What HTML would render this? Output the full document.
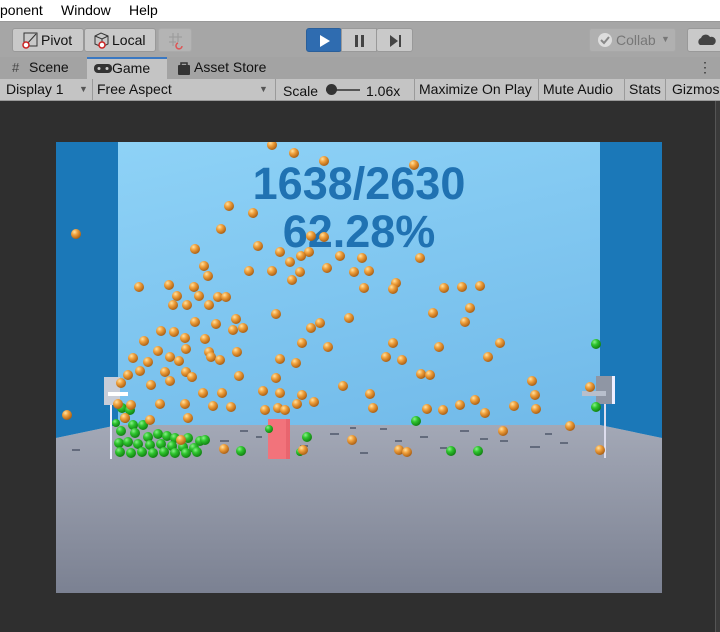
<!DOCTYPE html>
<html><head><meta charset="utf-8"><style>
*{margin:0;padding:0;box-sizing:border-box}
body{width:720px;height:632px;overflow:hidden;background:#2f2f2f;font-family:"Liberation Sans",sans-serif;position:relative}
.menu{position:absolute;left:0;top:0;width:720px;height:21px;background:#fff;font-size:14px;color:#000}
.menu span{position:absolute;top:2px}
.tb{position:absolute;left:0;top:21px;width:720px;height:36px;background:#a6a6a6;border-top:1px solid #999}
.btn{position:absolute;top:6px;height:24px;background:#c9c9c9;border:1px solid #999;border-radius:3px;font-size:14px;color:#111;line-height:22px}
.tabs{position:absolute;left:0;top:57px;width:720px;height:22px;background:#a3a3a3}
.tab{position:absolute;top:0;height:22px;font-size:14px;line-height:21px;color:#111}
.gt{position:absolute;left:0;top:79px;width:720px;height:22px;background:#c4c4c4;border-bottom:1px solid #999;font-size:14px;color:#111}
.gt div{position:absolute;top:0;height:21px;line-height:21px;border-right:1px solid #9a9a9a}
</style></head><body>
<div class="menu"><span style="left:0">ponent</span><span style="left:61px">Window</span><span style="left:129px">Help</span></div>
<div class="tb">
 <div class="btn" style="left:12px;width:72px"><svg width="20" height="20" style="position:absolute;left:8px;top:1px"><rect x="3" y="3" width="13" height="13" fill="none" stroke="#333"/><line x1="5" y1="15" x2="15" y2="4" stroke="#333"/><circle cx="5" cy="15" r="3" fill="#fff" stroke="#c22" stroke-width="1.5"/></svg><span style="position:absolute;left:28px">Pivot</span></div>
 <div class="btn" style="left:84px;width:72px"><svg width="20" height="20" style="position:absolute;left:7px;top:1px"><path d="M3 6 L9 3 L16 6 L16 14 L10 17 L3 14 Z M3 6 L10 9 L16 6 M10 9 V17" fill="none" stroke="#333"/><circle cx="10" cy="15" r="3" fill="#fff" stroke="#c22" stroke-width="1.5"/></svg><span style="position:absolute;left:27px">Local</span></div>
 <div class="btn" style="left:158px;width:34px;background:#b4b4b4;border-color:#aaa"><svg width="20" height="20" style="position:absolute;left:7px;top:1px"><path d="M7 3V16M12 3V12M3 7H16M3 12H10" stroke="#999"/><path d="M12 13a3 3 0 1 0 4 3" fill="none" stroke="#d55" stroke-width="1.5"/></svg></div>
 <div class="btn" style="left:306px;width:36px;background:#2f6cb0;border-color:#2a5f9a"><svg width="14" height="14" style="position:absolute;left:11px;top:5px"><path d="M2 1L12 7L2 13Z" fill="#fff"/></svg></div>
 <div class="btn" style="left:341px;width:36px;border-radius:0"><svg width="14" height="14" style="position:absolute;left:11px;top:5px"><rect x="2" y="1" width="3" height="12" fill="#444"/><rect x="8" y="1" width="3" height="12" fill="#444"/></svg></div>
 <div class="btn" style="left:376px;width:37px"><svg width="14" height="14" style="position:absolute;left:12px;top:5px"><path d="M1 1L9 7L1 13Z" fill="#444"/><rect x="10" y="1" width="2" height="12" fill="#444"/></svg></div>
 <div class="btn" style="left:589px;width:87px;background:#b0b0b0;border-color:#a8a8a8;color:#777"><svg width="16" height="16" style="position:absolute;left:7px;top:3px"><circle cx="8" cy="8" r="7" fill="#ddd"/><path d="M4 8L7 11L12 5" stroke="#888" stroke-width="2" fill="none"/></svg><span style="position:absolute;left:26px">Collab</span><span style="position:absolute;left:71px;top:-1px;font-size:9px">▼</span></div>
 <div class="btn" style="left:687px;width:40px"><svg width="22" height="16" style="position:absolute;left:8px;top:3px"><path d="M4 13a4 4 0 0 1 1-7a5 5 0 0 1 9-1a4 4 0 0 1 3 8Z" fill="#444"/></svg></div>
</div>
<div class="tabs">
 <div class="tab" style="left:4px;width:83px"><span style="position:absolute;left:8px;font-size:13px;color:#444">#</span><span style="position:absolute;left:25px">Scene</span></div>
 <div class="tab" style="left:87px;width:80px;background:#c4c4c4;border-top:2px solid #3a78c2;line-height:18px"><svg width="18" height="12" style="position:absolute;left:7px;top:4px"><rect x="0" y="1" width="18" height="9" rx="4" fill="#333"/><circle cx="5" cy="5.5" r="1.5" fill="#ccc"/><circle cx="13" cy="5.5" r="1.5" fill="#ccc"/></svg><span style="position:absolute;left:25px">Game</span></div>
 <div class="tab" style="left:176px;width:110px"><svg width="12" height="14" style="position:absolute;left:2px;top:4px"><rect x="0" y="4" width="12" height="10" rx="1" fill="#333"/><path d="M3 5V2h6v3" fill="none" stroke="#333" stroke-width="1.5"/></svg><span style="position:absolute;left:18px">Asset Store</span></div>
 <div class="tab" style="left:698px;color:#333">⋮</div>
</div>
<div class="gt">
 <div style="left:0;width:93px;padding-left:6px">Display 1<span style="position:absolute;left:79px;font-size:9px;color:#555">▼</span></div>
 <div style="left:93px;width:183px;padding-left:4px">Free Aspect<span style="position:absolute;left:166px;font-size:9px;color:#555">▼</span></div>
 <div style="left:276px;width:139px;padding-left:7px;line-height:24px">Scale<span style="position:absolute;left:50px;top:10px;width:34px;height:2px;background:#555"></span><span style="position:absolute;left:50px;top:5px;width:11px;height:11px;border-radius:50%;background:#333"></span><span style="position:absolute;left:90px">1.06x</span></div>
 <div style="left:415px;width:124px;padding-left:4px">Maximize On Play</div>
 <div style="left:539px;width:86px;padding-left:4px">Mute Audio</div>
 <div style="left:625px;width:41px;padding-left:4px">Stats</div>
 <div style="left:666px;width:60px;padding-left:6px">Gizmos</div>
</div>
<div style="position:absolute;left:715px;top:101px;width:5px;height:531px;background:#3a3a3a;border-left:1px solid #555"></div>
<svg style="position:absolute;left:56px;top:142px" width="606" height="451" viewBox="56 142 606 451">
<defs>
<linearGradient id="sky" x1="0" y1="0" x2="0.3" y2="1"><stop offset="0" stop-color="#8fd3f7"/><stop offset="1" stop-color="#6ab4e6"/></linearGradient>
<linearGradient id="fl" x1="0" y1="0" x2="0" y2="1"><stop offset="0" stop-color="#a3a8b6"/><stop offset="1" stop-color="#7b8192"/></linearGradient>
<radialGradient id="o" cx="0.35" cy="0.3" r="0.75"><stop offset="0" stop-color="#ffe2a0"/><stop offset="0.4" stop-color="#f0a03c"/><stop offset="1" stop-color="#a55a10"/></radialGradient>
<radialGradient id="g" cx="0.35" cy="0.3" r="0.75"><stop offset="0" stop-color="#8af08a"/><stop offset="0.4" stop-color="#2ec42e"/><stop offset="1" stop-color="#0f7a10"/></radialGradient>
</defs>
<rect x="56" y="142" width="606" height="451" fill="url(#sky)"/>
<polygon points="56,142 118,142 118,425 56,438" fill="#1b78b8"/>
<polygon points="600,142 662,142 662,438 600,425" fill="#1b78b8"/>
<polygon points="56,438 118,425 600,425 662,438 662,593 56,593" fill="url(#fl)"/>
<g fill="#4a5366" opacity="0.7">
<rect x="240" y="430" width="8" height="2"/><rect x="330" y="433" width="9" height="2"/><rect x="380" y="428" width="7" height="2"/><rect x="420" y="436" width="8" height="2"/><rect x="460" y="430" width="9" height="2"/><rect x="500" y="440" width="8" height="2"/><rect x="530" y="446" width="10" height="2"/><rect x="560" y="442" width="8" height="2"/><rect x="72" y="449" width="8" height="2"/><rect x="220" y="440" width="9" height="2"/><rect x="300" y="445" width="8" height="2"/><rect x="360" y="452" width="8" height="2"/><rect x="440" y="447" width="7" height="2"/><rect x="480" y="438" width="8" height="2"/><rect x="256" y="436" width="6" height="2"/><rect x="395" y="440" width="7" height="2"/><rect x="350" y="427" width="6" height="2"/><rect x="545" y="433" width="7" height="2"/>
</g>
<text x="359" y="199" font-family="Liberation Sans" font-size="45" font-weight="bold" fill="#2072b2" text-anchor="middle">1638/2630</text>
<text x="359" y="247" font-family="Liberation Sans" font-size="45" font-weight="bold" fill="#2072b2" text-anchor="middle">62.28%</text>
<rect x="104" y="377" width="16" height="28" fill="#c8cdd8"/><rect x="108" y="392" width="20" height="4" fill="#fff"/>
<rect x="110" y="405" width="2" height="54" fill="#eef"/>
<rect x="596" y="376" width="19" height="28" fill="#8f96a4"/><rect x="612" y="376" width="3" height="28" fill="#eef"/><rect x="582" y="391" width="24" height="5" fill="#b8bfcc"/>
<rect x="604" y="404" width="2" height="54" fill="#dde"/>
<rect x="268" y="419" width="22" height="40" fill="#f2737b"/><rect x="286" y="419" width="4" height="40" fill="#e8656e"/>
<g fill="url(#g)">
<circle cx="596" cy="344" r="5"/><circle cx="596" cy="407" r="5"/><circle cx="416" cy="421" r="5"/><circle cx="307" cy="437" r="5"/><circle cx="241" cy="451" r="5"/><circle cx="478" cy="451" r="5"/><circle cx="451" cy="451" r="5"/><circle cx="300" cy="452" r="4"/><circle cx="269" cy="429" r="4"/>
<circle cx="122" cy="408" r="5"/><circle cx="130" cy="410" r="5"/><circle cx="125" cy="418" r="5"/><circle cx="133" cy="425" r="5"/><circle cx="121" cy="431" r="5"/><circle cx="135" cy="433" r="5"/><circle cx="148" cy="437" r="5"/><circle cx="158" cy="434" r="5"/><circle cx="167" cy="436" r="5"/><circle cx="175" cy="438" r="5"/><circle cx="188" cy="438" r="5"/><circle cx="200" cy="441" r="5"/><circle cx="119" cy="443" r="5"/><circle cx="128" cy="442" r="5"/><circle cx="138" cy="444" r="5"/><circle cx="150" cy="445" r="5"/><circle cx="161" cy="444" r="5"/><circle cx="172" cy="446" r="5"/><circle cx="183" cy="447" r="5"/><circle cx="194" cy="448" r="5"/><circle cx="120" cy="452" r="5"/><circle cx="131" cy="453" r="5"/><circle cx="142" cy="452" r="5"/><circle cx="153" cy="453" r="5"/><circle cx="164" cy="452" r="5"/><circle cx="175" cy="453" r="5"/><circle cx="186" cy="453" r="5"/><circle cx="197" cy="452" r="5"/><circle cx="205" cy="440" r="5"/><circle cx="143" cy="425" r="5"/><circle cx="116" cy="423" r="4"/>
</g>
<g fill="url(#o)">
<circle cx="272" cy="145" r="5"/><circle cx="294" cy="153" r="5"/><circle cx="324" cy="161" r="5"/><circle cx="414" cy="165" r="5"/><circle cx="229" cy="206" r="5"/><circle cx="253" cy="213" r="5"/><circle cx="76" cy="234" r="5"/><circle cx="221" cy="229" r="5"/><circle cx="195" cy="249" r="5"/><circle cx="258" cy="246" r="5"/><circle cx="311" cy="236" r="5"/><circle cx="324" cy="237" r="5"/><circle cx="309" cy="252" r="5"/><circle cx="280" cy="252" r="5"/><circle cx="301" cy="256" r="5"/><circle cx="290" cy="262" r="5"/><circle cx="340" cy="256" r="5"/><circle cx="362" cy="258" r="5"/><circle cx="420" cy="258" r="5"/><circle cx="204" cy="266" r="5"/><circle cx="249" cy="271" r="5"/><circle cx="272" cy="271" r="5"/><circle cx="300" cy="272" r="5"/><circle cx="327" cy="268" r="5"/><circle cx="354" cy="272" r="5"/><circle cx="369" cy="271" r="5"/><circle cx="208" cy="276" r="5"/><circle cx="292" cy="280" r="5"/><circle cx="396" cy="283" r="5"/><circle cx="139" cy="287" r="5"/><circle cx="169" cy="285" r="5"/><circle cx="194" cy="287" r="5"/><circle cx="177" cy="296" r="5"/><circle cx="199" cy="296" r="5"/><circle cx="218" cy="297" r="5"/><circle cx="364" cy="288" r="5"/><circle cx="393" cy="289" r="5"/><circle cx="444" cy="288" r="5"/><circle cx="462" cy="287" r="5"/><circle cx="480" cy="286" r="5"/><circle cx="173" cy="305" r="5"/><circle cx="187" cy="305" r="5"/><circle cx="209" cy="305" r="5"/><circle cx="226" cy="297" r="5"/><circle cx="276" cy="314" r="5"/><circle cx="349" cy="318" r="5"/><circle cx="236" cy="319" r="5"/><circle cx="320" cy="323" r="5"/><circle cx="311" cy="328" r="5"/><circle cx="465" cy="322" r="5"/><circle cx="433" cy="313" r="5"/><circle cx="470" cy="308" r="5"/><circle cx="161" cy="331" r="5"/><circle cx="174" cy="332" r="5"/><circle cx="195" cy="322" r="5"/><circle cx="216" cy="324" r="5"/><circle cx="233" cy="330" r="5"/><circle cx="243" cy="328" r="5"/><circle cx="185" cy="338" r="5"/><circle cx="205" cy="339" r="5"/><circle cx="144" cy="341" r="5"/><circle cx="158" cy="351" r="5"/><circle cx="186" cy="349" r="5"/><circle cx="209" cy="352" r="5"/><circle cx="237" cy="352" r="5"/><circle cx="302" cy="343" r="5"/><circle cx="328" cy="347" r="5"/><circle cx="393" cy="343" r="5"/><circle cx="439" cy="347" r="5"/><circle cx="500" cy="343" r="5"/><circle cx="133" cy="358" r="5"/><circle cx="148" cy="362" r="5"/><circle cx="170" cy="357" r="5"/><circle cx="179" cy="361" r="5"/><circle cx="211" cy="357" r="5"/><circle cx="220" cy="360" r="5"/><circle cx="280" cy="359" r="5"/><circle cx="296" cy="363" r="5"/><circle cx="386" cy="357" r="5"/><circle cx="402" cy="360" r="5"/><circle cx="488" cy="357" r="5"/><circle cx="128" cy="375" r="5"/><circle cx="140" cy="371" r="5"/><circle cx="165" cy="372" r="5"/><circle cx="186" cy="372" r="5"/><circle cx="192" cy="377" r="5"/><circle cx="239" cy="376" r="5"/><circle cx="276" cy="378" r="5"/><circle cx="421" cy="374" r="5"/><circle cx="430" cy="375" r="5"/><circle cx="532" cy="381" r="5"/><circle cx="121" cy="383" r="5"/><circle cx="151" cy="385" r="5"/><circle cx="170" cy="381" r="5"/><circle cx="203" cy="393" r="5"/><circle cx="222" cy="393" r="5"/><circle cx="263" cy="391" r="5"/><circle cx="280" cy="393" r="5"/><circle cx="302" cy="395" r="5"/><circle cx="343" cy="386" r="5"/><circle cx="370" cy="394" r="5"/><circle cx="475" cy="400" r="5"/><circle cx="535" cy="395" r="5"/><circle cx="118" cy="404" r="5"/><circle cx="131" cy="405" r="5"/><circle cx="160" cy="404" r="5"/><circle cx="185" cy="404" r="5"/><circle cx="213" cy="406" r="5"/><circle cx="231" cy="407" r="5"/><circle cx="265" cy="410" r="5"/><circle cx="278" cy="408" r="5"/><circle cx="285" cy="410" r="5"/><circle cx="297" cy="404" r="5"/><circle cx="314" cy="402" r="5"/><circle cx="373" cy="408" r="5"/><circle cx="427" cy="409" r="5"/><circle cx="443" cy="410" r="5"/><circle cx="460" cy="405" r="5"/><circle cx="485" cy="413" r="5"/><circle cx="514" cy="406" r="5"/><circle cx="536" cy="409" r="5"/><circle cx="67" cy="415" r="5"/><circle cx="125" cy="418" r="5"/><circle cx="150" cy="420" r="5"/><circle cx="188" cy="418" r="5"/><circle cx="570" cy="426" r="5"/><circle cx="352" cy="440" r="5"/><circle cx="399" cy="450" r="5"/><circle cx="407" cy="452" r="5"/><circle cx="600" cy="450" r="5"/><circle cx="224" cy="449" r="5"/><circle cx="181" cy="440" r="5"/><circle cx="590" cy="387" r="5"/><circle cx="303" cy="450" r="5"/><circle cx="503" cy="431" r="5"/>
</g>
</svg>
</body></html>
